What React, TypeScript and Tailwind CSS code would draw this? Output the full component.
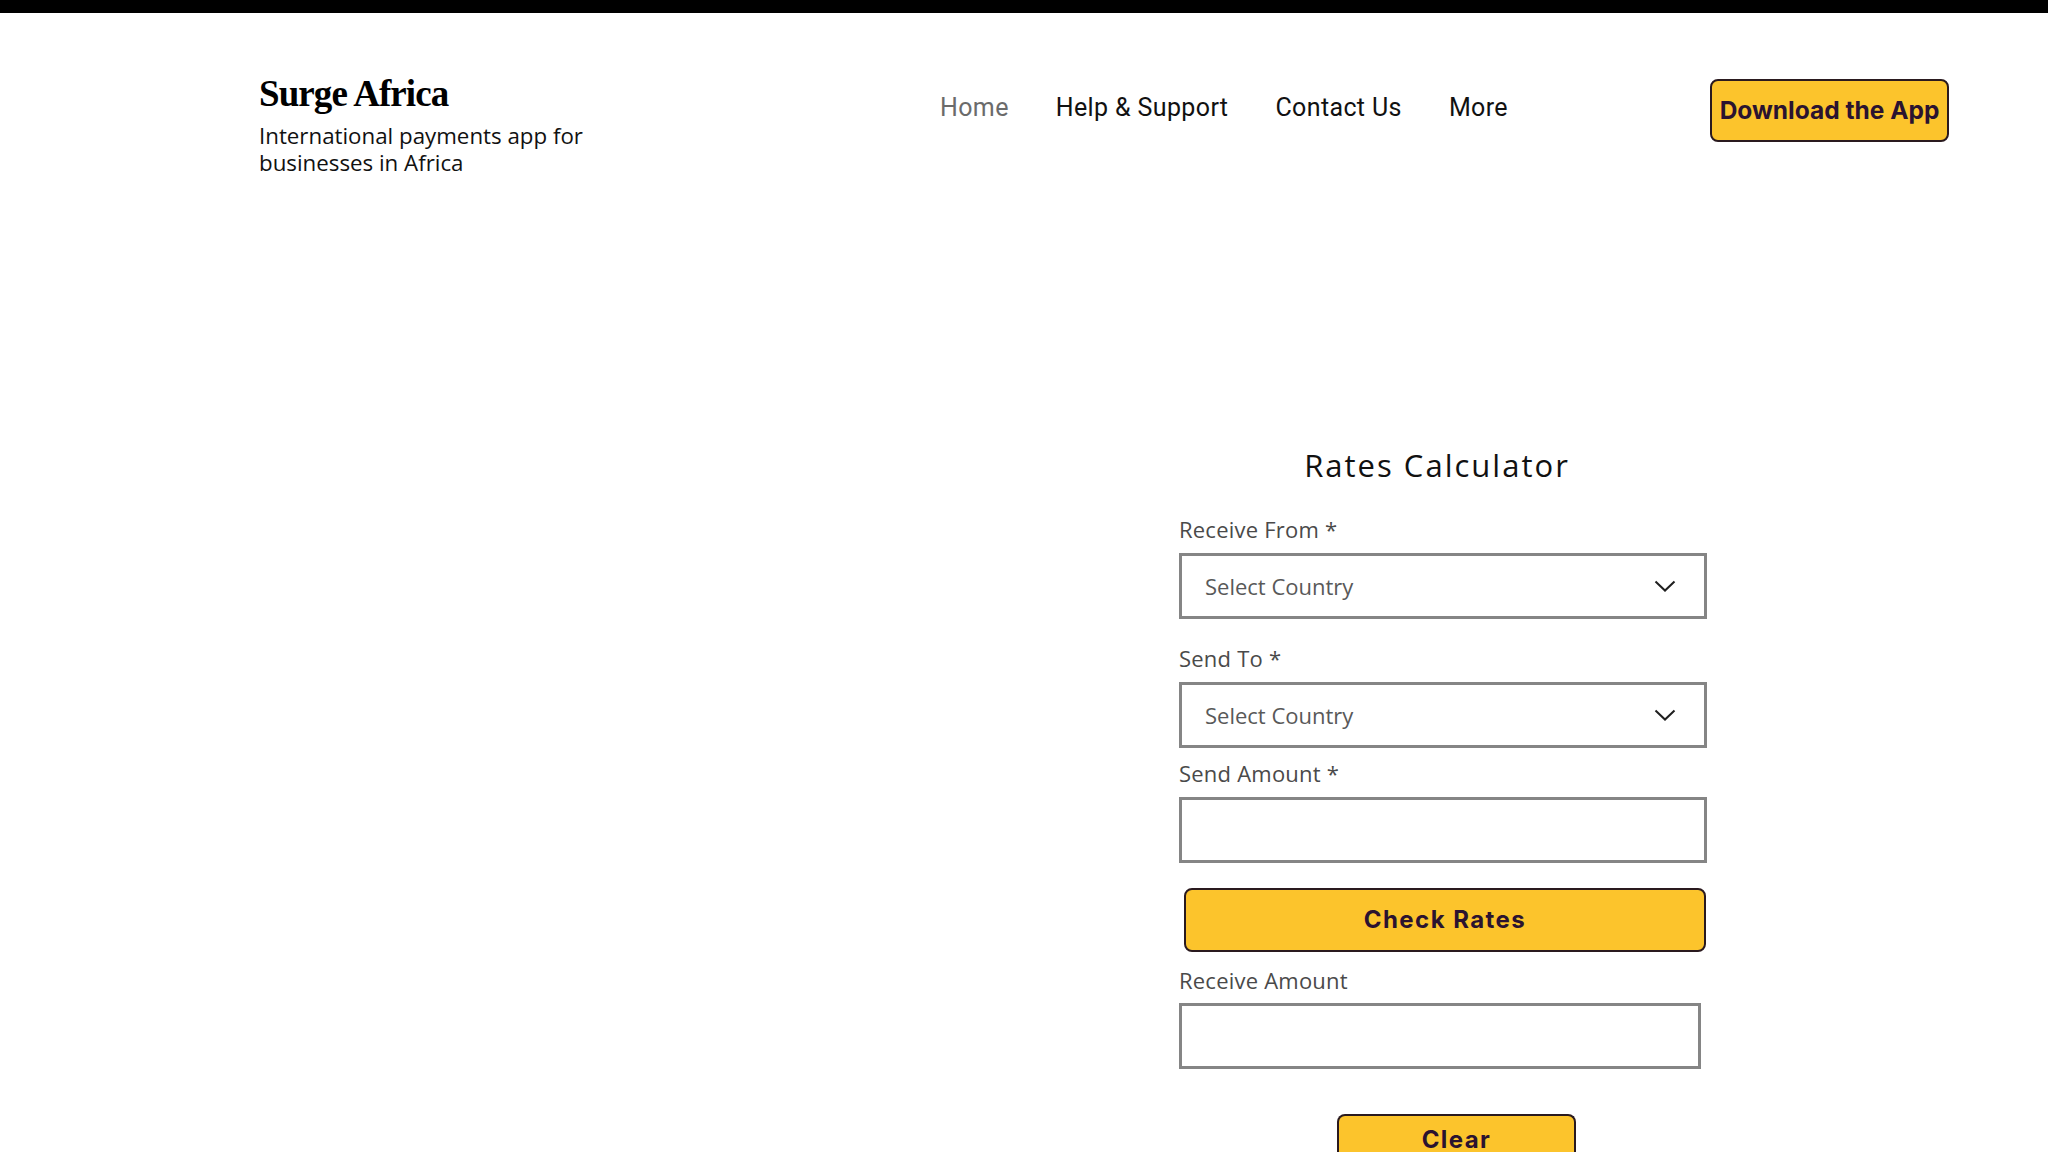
const Label = ({ text, className = "" }: { text: string; className?: string }) => (
  <label className={`block text-[22px] leading-[30px] tracking-[0.01em] text-[#4a4a4a] ${className}`}>{text}</label>
);

const SelectBox = ({ className = "" }: { className?: string }) => (
  <div
    className={`flex h-[66px] w-[528px] items-center justify-between border-[3px] border-[#858585] bg-white pl-[23px] pr-[28px] ${className}`}
  >
    <span className="text-[22px] text-[#595959]">Select Country</span>
    <svg width="22" height="12" viewBox="0 0 22 12" fill="none">
      <path d="M1.5 1.5L11 10.5L20.5 1.5" stroke="#1f1f1f" strokeWidth="2" />
    </svg>
  </div>
);

export default function App() {
  return (
    <div className="min-h-screen bg-white font-['Open_Sans',sans-serif] text-black">
      <div className="h-[13px] bg-black" />

      <header className="flex h-[163px] items-start pl-[259px] pr-[99px] pt-[59px]">
        <div className="w-[681px]">
          <h1 className="font-['Liberation_Serif',serif] text-[37px] font-bold leading-[44px] tracking-[-0.025em]">
            Surge Africa
          </h1>
          <p className="mt-[6px] text-[22.3px] leading-[27px] text-[#111]">
            International payments app for
            <br />
            businesses in Africa
          </p>
        </div>

        <nav className="mt-[21px] flex gap-[47px] font-['Roboto',sans-serif] text-[25px] leading-[29px] tracking-[0.015em]">
          <a className="text-[#6b6b6b]">Home</a>
          <a className="text-[#111]">Help &amp; Support</a>
          <a className="text-[#111]">Contact Us</a>
          <a className="text-[#111]">More</a>
        </nav>

        <button className="ml-auto mt-[7px] h-[63px] w-[239px] rounded-[8px] border-2 border-[#2a1a1f] bg-[#fcc42c] font-['Inter',sans-serif] text-[24.5px] font-bold text-[#2b1330]">
          Download the App
        </button>
      </header>

      <main className="pl-[1179px] pt-[271px]">
        <div className="flex w-[528px] flex-col">
          <h2 className="pr-[12px] text-center text-[31px] leading-[37px] tracking-[0.065em] text-[#111]">
            Rates Calculator
          </h2>

          <Label text="Receive From *" className="mt-[30px]" />
          <SelectBox className="mt-[9px]" />

          <Label text="Send To *" className="mt-[24px]" />
          <SelectBox className="mt-[9px]" />

          <Label text="Send Amount *" className="mt-[10px]" />
          <input className="mt-[9px] h-[66px] w-[528px] border-[3px] border-[#858585] bg-white px-[23px] text-[22px] outline-none" />

          <button className="ml-[5px] mt-[25px] h-[64px] w-[522px] rounded-[8px] border-2 border-[#2a1a1f] bg-[#fcc42c] font-['Inter',sans-serif] text-[24px] font-bold tracking-[0.06em] text-[#2b1330]">
            Check Rates
          </button>

          <Label text="Receive Amount" className="mt-[13px]" />
          <input className="mt-[8px] h-[66px] w-[522px] border-[3px] border-[#858585] bg-white px-[23px] text-[22px] outline-none" />

          <button className="ml-[158px] mt-[45px] h-[50px] w-[239px] rounded-t-[8px] border-x-2 border-t-2 border-[#2a1a1f] bg-[#fcc42c] font-['Inter',sans-serif] text-[24px] font-bold tracking-[0.06em] text-[#2b1330]">
            Clear
          </button>
        </div>
      </main>
    </div>
  );
}
